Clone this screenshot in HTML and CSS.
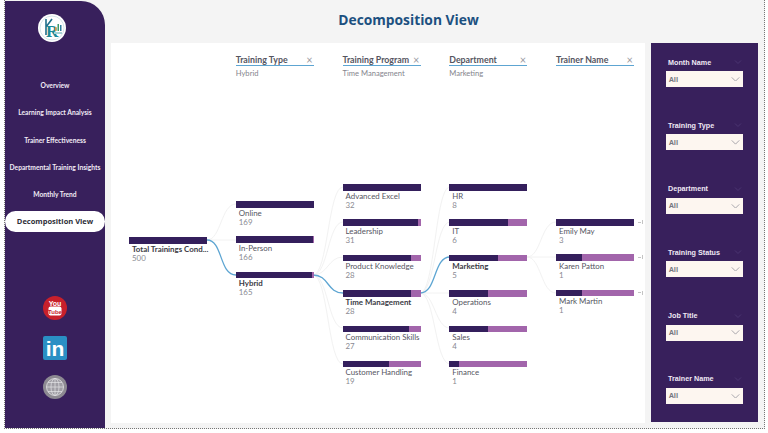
FILE: index.html
```html
<!DOCTYPE html>
<html lang="en">
<head>
  <meta charset="UTF-8">
  <title>Decomposition View</title>
  <link rel="stylesheet" href="styles.css">
</head>
<body>

<div class="frame">
  <aside class="sidebar">
    <svg class="logo" viewBox="0 0 28 28">
      <circle cx="14" cy="14" r="14" fill="#fff"/>
      <circle cx="14" cy="14" r="12" fill="none" stroke="#d5e6ea" stroke-width="1"/>
      <path d="M8 5v16M8 13l6-8" fill="none" stroke="#1f6f8b" stroke-width="1.6"/>
      <text x="8" y="23" class="logo-r">R</text>
      <rect x="17" y="13" width="1.5" height="4" fill="#e8963a"/>
      <rect x="19.5" y="10" width="1.5" height="7" fill="#3c9a6b"/>
      <rect x="22" y="11" width="1.5" height="6" fill="#2f7f9e"/>
      <rect x="16" y="18" width="8" height="2" fill="#a8d3d5"/>
    </svg>
    <nav class="nav">
      <a class="nav-item">Overview</a>
      <a class="nav-item">Learning Impact Analysis</a>
      <a class="nav-item">Trainer Effectiveness</a>
      <a class="nav-item">Departmental Training Insights</a>
      <a class="nav-item">Monthly Trend</a>
      <a class="nav-item active">Decomposition View</a>
    </nav>
    <div class="social">
      <svg viewBox="0 0 24 24">
        <circle cx="12" cy="12" r="12" fill="#c8202b"/>
        <text x="12" y="9.5" class="yt-you">You</text>
        <rect x="5.5" y="10.5" width="13" height="9" rx="2" fill="#fff"/>
        <text x="12" y="17.5" class="yt-tube">Tube</text>
      </svg>
      <svg viewBox="0 0 24 24">
        <rect width="24" height="24" rx="2" fill="#2a8fc4"/>
        <text x="12" y="20" class="li-text">in</text>
      </svg>
      <svg viewBox="0 0 24 24">
        <circle cx="12" cy="12" r="12" fill="#8d8a92"/>
        <circle cx="12" cy="12" r="8.5" fill="#a09ea5" stroke="#e4e4e6" stroke-width="0.8"/>
        <g fill="none" stroke="#e4e4e6" stroke-width="0.7">
          <ellipse cx="12" cy="12" rx="4" ry="8.5"/>
          <path d="M3.5 12h17M5 7.5h14M5 16.5h14M12 3.5v17"/>
        </g>
      </svg>
    </div>
  </aside>

  <main class="main">
    <header class="title-bar">
      <h1>Decomposition View</h1>
    </header>
    <div class="content">
      <section class="canvas">
        <svg class="links" width="534" height="380">
          <g fill="none" stroke="#f2f2f2" stroke-width="1">
            <path d="M96 197C110 197 110 161 125 161"/>
            <path d="M96 197H125"/>
            <path d="M202 232C217 232 217 144 232 144"/>
            <path d="M202 232C217 232 217 179 232 179"/>
            <path d="M202 232C217 232 217 214 232 214"/>
            <path d="M202 232C217 232 217 285 232 285"/>
            <path d="M202 232C217 232 217 321 232 321"/>
            <path d="M309 250C324 250 324 144 339 144"/>
            <path d="M309 250C324 250 324 179 339 179"/>
            <path d="M309 250C324 250 324 285 339 285"/>
            <path d="M309 250C324 250 324 321 339 321"/>
            <path d="M309 250C324 250 324 250 339 250"/>
            <path d="M416 214C430 214 430 179 445 179"/>
            <path d="M416 214H445"/>
            <path d="M416 214C430 214 430 250 445 250"/>
          </g>
          <g fill="none" stroke="#5da5d2" stroke-width="1.3">
            <path d="M96 197C112 197 108 232 125 232"/>
            <path d="M202 232C218 232 216 250 232 250"/>
            <path d="M309 250C326 250 322 214 339 214"/>
          </g>
        </svg>

        <div class="tree">
          <div class="col">
            <div class="col-head empty"></div>
            <div class="nodes start-root">
              <div class="node">
                <div class="bar"><span class="fill" style="width:100%"></span></div>
                <div class="name strong">Total Trainings Cond...</div>
                <div class="num">500</div>
              </div>
            </div>
          </div>

          <div class="col">
            <div class="col-head">
              <div class="col-title"><span>Training Type</span><i>×</i></div>
              <div class="col-sub">Hybrid</div>
            </div>
            <div class="nodes start-type">
              <div class="node">
                <div class="bar"><span class="fill" style="width:100%"></span></div>
                <div class="name">Online</div>
                <div class="num">169</div>
              </div>
              <div class="node">
                <div class="bar"><span class="fill" style="width:99%"></span></div>
                <div class="name">In-Person</div>
                <div class="num">166</div>
              </div>
              <div class="node">
                <div class="bar"><span class="fill" style="width:98%"></span></div>
                <div class="name strong">Hybrid</div>
                <div class="num">165</div>
              </div>
            </div>
          </div>

          <div class="col">
            <div class="col-head">
              <div class="col-title"><span>Training Program</span><i>×</i></div>
              <div class="col-sub">Time Management</div>
            </div>
            <div class="nodes start-program">
              <div class="node">
                <div class="bar"><span class="fill" style="width:100%"></span></div>
                <div class="name">Advanced Excel</div>
                <div class="num">32</div>
              </div>
              <div class="node">
                <div class="bar"><span class="fill" style="width:97%"></span></div>
                <div class="name">Leadership</div>
                <div class="num">31</div>
              </div>
              <div class="node">
                <div class="bar"><span class="fill" style="width:88%"></span></div>
                <div class="name">Product Knowledge</div>
                <div class="num">28</div>
              </div>
              <div class="node">
                <div class="bar"><span class="fill" style="width:88%"></span></div>
                <div class="name strong">Time Management</div>
                <div class="num">28</div>
              </div>
              <div class="node">
                <div class="bar"><span class="fill" style="width:85%"></span></div>
                <div class="name">Communication Skills</div>
                <div class="num">27</div>
              </div>
              <div class="node">
                <div class="bar"><span class="fill" style="width:59%"></span></div>
                <div class="name">Customer Handling</div>
                <div class="num">19</div>
              </div>
            </div>
          </div>

          <div class="col">
            <div class="col-head">
              <div class="col-title"><span>Department</span><i>×</i></div>
              <div class="col-sub">Marketing</div>
            </div>
            <div class="nodes start-program">
              <div class="node">
                <div class="bar"><span class="fill" style="width:100%"></span></div>
                <div class="name">HR</div>
                <div class="num">8</div>
              </div>
              <div class="node">
                <div class="bar"><span class="fill" style="width:75%"></span></div>
                <div class="name">IT</div>
                <div class="num">6</div>
              </div>
              <div class="node">
                <div class="bar"><span class="fill" style="width:62.5%"></span></div>
                <div class="name strong">Marketing</div>
                <div class="num">5</div>
              </div>
              <div class="node">
                <div class="bar"><span class="fill" style="width:50%"></span></div>
                <div class="name">Operations</div>
                <div class="num">4</div>
              </div>
              <div class="node">
                <div class="bar"><span class="fill" style="width:50%"></span></div>
                <div class="name">Sales</div>
                <div class="num">4</div>
              </div>
              <div class="node">
                <div class="bar"><span class="fill" style="width:12.5%"></span></div>
                <div class="name">Finance</div>
                <div class="num">1</div>
              </div>
            </div>
          </div>

          <div class="col">
            <div class="col-head">
              <div class="col-title"><span>Trainer Name</span><i>×</i></div>
            </div>
            <div class="nodes start-trainer">
              <div class="node expand">
                <div class="bar"><span class="fill" style="width:100%"></span></div>
                <div class="name">Emily May</div>
                <div class="num">3</div>
              </div>
              <div class="node expand">
                <div class="bar"><span class="fill" style="width:33.3%"></span></div>
                <div class="name">Karen Patton</div>
                <div class="num">1</div>
              </div>
              <div class="node expand">
                <div class="bar"><span class="fill" style="width:33.3%"></span></div>
                <div class="name">Mark Martin</div>
                <div class="num">1</div>
              </div>
            </div>
          </div>
        </div>
      </section>

      <aside class="filters">
        <div class="slicer">
          <div class="slicer-label"><span>Month Name</span><svg viewBox="0 0 8 4"><path d="M1 .5l3 3 3-3"/></svg></div>
          <div class="dropdown"><span>All</span><svg viewBox="0 0 12 6"><path d="M1 .5l5 5 5-5"/></svg></div>
        </div>
        <div class="slicer">
          <div class="slicer-label"><span>Training Type</span><svg viewBox="0 0 8 4"><path d="M1 .5l3 3 3-3"/></svg></div>
          <div class="dropdown"><span>All</span><svg viewBox="0 0 12 6"><path d="M1 .5l5 5 5-5"/></svg></div>
        </div>
        <div class="slicer">
          <div class="slicer-label"><span>Department</span><svg viewBox="0 0 8 4"><path d="M1 .5l3 3 3-3"/></svg></div>
          <div class="dropdown"><span>All</span><svg viewBox="0 0 12 6"><path d="M1 .5l5 5 5-5"/></svg></div>
        </div>
        <div class="slicer">
          <div class="slicer-label"><span>Training Status</span><svg viewBox="0 0 8 4"><path d="M1 .5l3 3 3-3"/></svg></div>
          <div class="dropdown"><span>All</span><svg viewBox="0 0 12 6"><path d="M1 .5l5 5 5-5"/></svg></div>
        </div>
        <div class="slicer">
          <div class="slicer-label"><span>Job Title</span><svg viewBox="0 0 8 4"><path d="M1 .5l3 3 3-3"/></svg></div>
          <div class="dropdown"><span>All</span><svg viewBox="0 0 12 6"><path d="M1 .5l5 5 5-5"/></svg></div>
        </div>
        <div class="slicer">
          <div class="slicer-label"><span>Trainer Name</span><svg viewBox="0 0 8 4"><path d="M1 .5l3 3 3-3"/></svg></div>
          <div class="dropdown"><span>All</span><svg viewBox="0 0 12 6"><path d="M1 .5l5 5 5-5"/></svg></div>
        </div>
      </aside>
    </div>
  </main>
</div>

</body>
</html>
```

FILE: styles.css
```css
* {
  box-sizing: border-box;
}

html, body {
  margin: 0;
  height: 433px;
  overflow: hidden;
  background-color: #fff;
}

body {
  font-family: "Open Sans", Arial, sans-serif;
  padding-left: 4px;
}

.frame {
  display: flex;
  width: 761px;
  height: 429px;
  padding-top: 1px;
  background-color: #f4f4f4;
  border-left: 1px dotted #777;
  border-right: 1px dotted #777;
  border-bottom: 1px dotted #777;
}

/* left menu */
.sidebar {
  width: 100px;
  flex-shrink: 0;
  display: flex;
  flex-direction: column;
  align-items: center;
  padding-top: 13px;
  background-color: #38205c;
  border-top-right-radius: 24px;
}

.logo {
  width: 28px;
  height: 28px;
  margin-left: -6px;
}

.logo-r {
  font: bold 17px "Liberation Serif", serif;
  fill: #1c8a97;
}

.nav {
  width: 100%;
  margin-top: 32.5px;
  display: flex;
  flex-direction: column;
  gap: 6.3px;
}

.nav-item {
  height: 21px;
  display: flex;
  align-items: center;
  justify-content: center;
  font-family: Lato, Arial, sans-serif;
  font-size: 6.7px;
  font-weight: 700;
  color: #f1ebf5;
  white-space: nowrap;
}

.nav-item.active {
  background-color: #fff;
  border-radius: 11px;
  font-family: "Open Sans", Arial, sans-serif;
  color: #2e2e38;
  font-size: 7.5px;
}

.social {
  margin-top: 64.5px;
  display: flex;
  flex-direction: column;
  gap: 15.5px;
}

.social svg {
  display: block;
  width: 24px;
  height: 24px;
}

.yt-you {
  font: bold 7px "Liberation Sans", sans-serif;
  fill: #fff;
  text-anchor: middle;
}

.yt-tube {
  font: bold 6px "Liberation Sans", sans-serif;
  fill: #c8202b;
  text-anchor: middle;
}

.li-text {
  font: bold 21px "Liberation Sans", sans-serif;
  fill: #fff;
  text-anchor: middle;
}

/* main area */
.main {
  flex: 1;
  display: flex;
  flex-direction: column;
  padding: 0 6px;
}

.title-bar {
  height: 42px;
  display: flex;
  align-items: center;
  justify-content: center;
  flex-shrink: 0;
  padding: 0 52px 5px 0;
}

h1 {
  margin: 0;
  font-size: 13.8px;
  font-weight: 700;
  color: #1c5080;
}

.content {
  display: flex;
  gap: 6px;
}

.canvas {
  position: relative;
  width: 534px;
  height: 380px;
  background-color: #fff;
}

.links {
  position: absolute;
  left: 0;
  top: 0;
}

.tree {
  position: relative;
  display: flex;
  gap: 28.75px;
  padding-left: 18px;
}

.col {
  width: 78px;
}

.col-head {
  height: 39px;
  padding-top: 10px;
}

.col-title {
  display: flex;
  justify-content: space-between;
  align-items: center;
  height: 13px;
  font-family: Lato, Arial, sans-serif;
  font-size: 8.8px;
  font-weight: 700;
  color: #55555f;
  white-space: nowrap;
  border-bottom: 1.5px solid #5da5d2;
}

.col-title i {
  font-style: normal;
  font-size: 11px;
  font-weight: 400;
  color: #9a9aa2;
  padding-right: 1px;
}

.col-sub {
  margin-top: 2px;
  font-family: Lato, Arial, sans-serif;
  font-size: 7.6px;
  line-height: 10px;
  color: #85858d;
}

.start-root {
  margin-top: 155px;
}

.start-type {
  margin-top: 119px;
}

.start-program {
  margin-top: 102px;
}

.start-trainer {
  margin-top: 137px;
}

.node {
  position: relative;
  height: 35.4px;
}

.bar {
  height: 6.5px;
  background-color: #a265ab;
}

.fill {
  display: block;
  height: 100%;
  background-color: #341f5c;
}

.expand::after {
  content: "";
  position: absolute;
  left: 82px;
  top: 1px;
  width: 4px;
  height: 4px;
  border-right: 1px solid #c4c4c4;
  background: linear-gradient(#c4c4c4, #c4c4c4) 0 1.5px / 3px 1px no-repeat;
}

.name {
  padding-left: 3px;
  font-family: Lato, Arial, sans-serif;
  font-size: 7.9px;
  line-height: 10px;
  color: #55555f;
  white-space: nowrap;
}

.name.strong {
  font-weight: 700;
  color: #3a3a44;
}

.num {
  padding-left: 3px;
  font-family: Lato, Arial, sans-serif;
  font-size: 7.9px;
  line-height: 8px;
  color: #8a8a92;
}

/* right filter panel */
.filters {
  width: 107px;
  height: 379px;
  padding: 13px 15px 0;
  background-color: #38205c;
}

.slicer {
  height: 63.4px;
}

.slicer-label {
  display: flex;
  justify-content: space-between;
  align-items: center;
  height: 12px;
  margin-bottom: 3px;
  padding-left: 2px;
  font-family: "Liberation Sans", Arial, sans-serif;
  font-size: 7.2px;
  font-weight: 700;
  color: #efe8f4;
}

.slicer-label svg {
  width: 8px;
  height: 4px;
  margin-right: 1px;
}

.slicer-label path {
  fill: none;
  stroke: #4a3570;
  stroke-width: 1;
}

.dropdown {
  display: flex;
  justify-content: space-between;
  align-items: center;
  height: 16px;
  padding: 0 2px 0 3px;
  background-color: #fdf6f0;
  font-size: 7px;
  font-weight: 700;
  color: #77777f;
}

.dropdown svg {
  width: 9px;
  height: 4.5px;
  margin-right: 1px;
}

.dropdown path {
  fill: none;
  stroke: #8d8d95;
  stroke-width: 1;
}
```
